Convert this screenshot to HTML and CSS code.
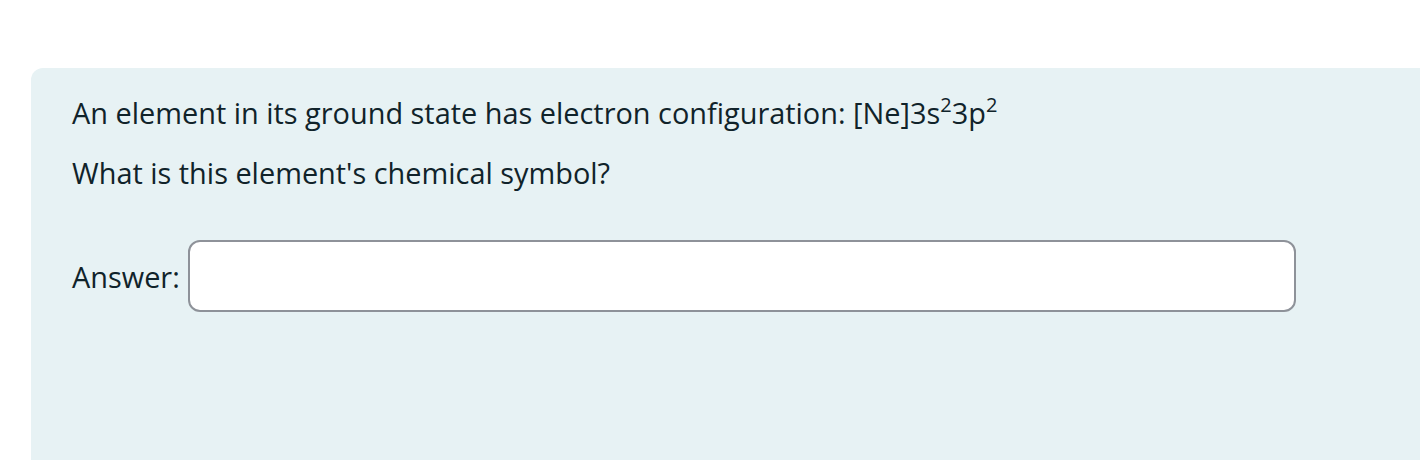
FILE: index.html
```html
<!DOCTYPE html>
<html>
<head>
<meta charset="utf-8">
<link rel="stylesheet" href="styles.css">
</head>
<body>
<div class="panel">
  <p class="q">An element in its ground state has electron configuration: [Ne]3s<sup>2</sup>3p<sup>2</sup></p>
  <p class="q">What is this element's chemical symbol?</p>
  <div class="answer">
    <label class="label" for="ans">Answer:</label>
    <input class="input" id="ans" type="text">
  </div>
</div>
</body>
</html>
```
FILE: styles.css
```css
html, body {
  margin: 0;
  padding: 0;
  background: #ffffff;
  overflow: hidden;
}
body {
  font-family: "Open Sans", "Noto Sans", sans-serif;
  color: #10232a;
  height: 460px;
}
.panel {
  margin: 68px 0 0 31px;
  background: #e7f2f4;
  border-radius: 12px 0 0 0;
  padding: 25px 40px 0 41px;
  height: 367px;
}
.q {
  margin: 0 0 20px 0;
  font-size: 28.9px;
  line-height: 40px;
}
sup {
  font-size: 20px;
  line-height: 0;
  vertical-align: 0;
  position: relative;
  top: -12px;
}
.answer {
  display: flex;
  align-items: center;
  margin-top: 47px;
  gap: 8px;
}
.label {
  font-size: 28.9px;
}
.input {
  width: 1108px;
  height: 72px;
  box-sizing: border-box;
  border: 2px solid #8e9299;
  border-radius: 12px;
  background: #fff;
  font-size: 28px;
  outline: none;
}
```
